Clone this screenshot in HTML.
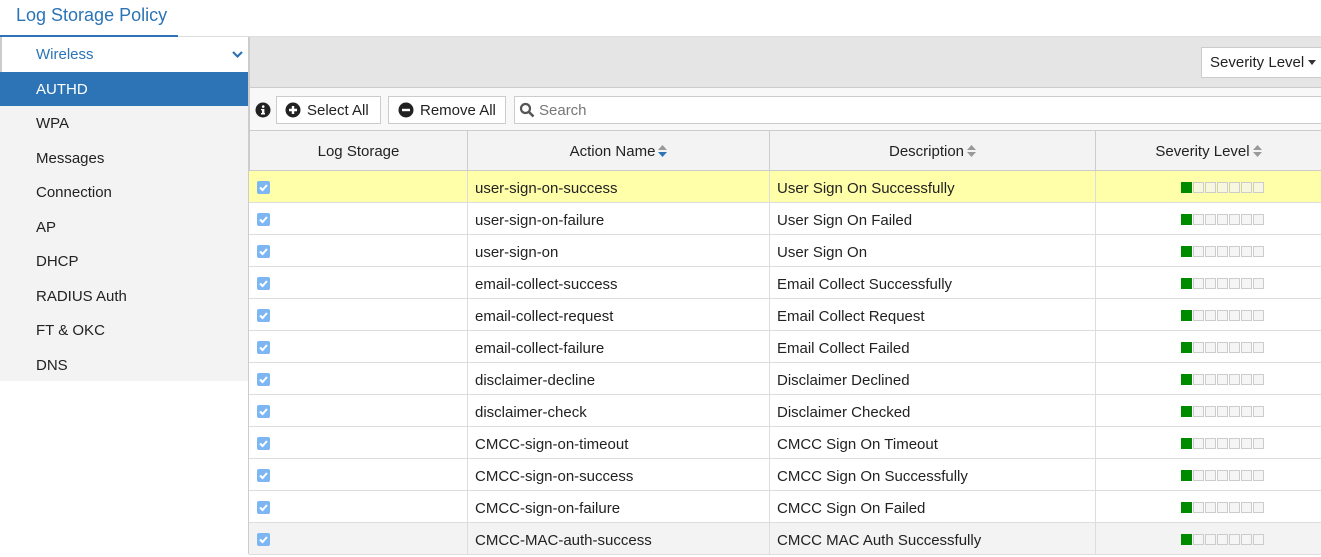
<!DOCTYPE html>
<html><head><meta charset="utf-8"><style>
*{margin:0;padding:0;box-sizing:border-box}
body{width:1321px;height:554px;overflow:hidden;background:#fff;font-family:"Liberation Sans",sans-serif;font-size:15px;color:#222;position:relative}
.a{position:absolute}
.title{left:16px;top:5px;font-size:18px;color:#2c74b5}
.side{left:0;top:37px;width:248px;height:344px;background:#f3f3f3}
.it{position:absolute;left:0;width:248px;height:34px;padding-left:36px;line-height:36px;font-size:15px;color:#222}
.row{position:absolute;left:249px;width:1072px;height:32px;border-bottom:1px solid #ddd}
.row div{position:absolute;top:2px;line-height:32px}
.row div.ln{top:0}
.cb{left:8px;top:10px!important;width:13px;height:13px;background:#7eb6f2;border-radius:2px;line-height:0!important}
.cb svg{display:block}
.sq{position:absolute;top:11px;width:11px;height:11px;border:1px solid #ccc;background:#f5f5f5}
.btn{position:absolute;top:96px;height:28px;border:1px solid #ccc;background:#fff;line-height:26px;font-size:15px}
.hd{position:absolute;top:131px;height:40px;line-height:42px;text-align:center;border-right:1px solid #ccc;color:#222}
.sort{display:inline-block;width:9px;height:14px;vertical-align:-2px;margin-left:3px}
</style></head><body>
<div class="a title">Log Storage Policy</div>
<div class="a" style="left:0;top:35px;width:178px;height:2px;background:#2c74b5"></div>
<div class="a" style="left:178px;top:36px;width:1143px;height:1px;background:#ddd"></div>
<div class="a side"></div>
<div class="it" style="top:37px;height:35px;background:#fff;border-left:2px solid #ccc;padding-left:34px;color:#2c74b5;line-height:35px">Wireless
<svg class="a" style="left:230px;top:14px" width="11" height="8" viewBox="0 0 11 8"><path d="M1 1l4.5 4.5L10 1" stroke="#2c74b5" stroke-width="2.2" fill="none"/></svg></div>
<div class="it" style="top:72px;background:#2c74b5;color:#fff">AUTHD</div>
<div class="it" style="top:106px">WPA</div>
<div class="it" style="top:141px">Messages</div>
<div class="it" style="top:175px">Connection</div>
<div class="it" style="top:210px">AP</div>
<div class="it" style="top:244px">DHCP</div>
<div class="it" style="top:279px">RADIUS Auth</div>
<div class="it" style="top:313px">FT &amp; OKC</div>
<div class="it" style="top:348px">DNS</div>
<div class="a" style="left:248px;top:37px;width:2px;height:517px;background:#ccc"></div>
<div class="a" style="left:250px;top:37px;width:1071px;height:50px;background:#e5e5e5"></div>
<div class="a" style="left:1201px;top:47px;width:130px;height:31px;background:#fff;border:1px solid #ccc;line-height:30px;padding-left:8px">Severity Level <svg width="8" height="5" viewBox="0 0 8 5" style="vertical-align:2px"><path d="M0 0h8L4 5z" fill="#333"/></svg></div>
<div class="a" style="left:250px;top:87px;width:1071px;height:44px;background:#f8f8f8;border-top:1px solid #ccc;border-bottom:1px solid #ccc"></div>
<svg class="a" style="left:255px;top:102px" width="16" height="16" viewBox="0 0 16 16"><circle cx="8" cy="8" r="7.5" fill="#222"/><rect x="7" y="7" width="2.4" height="5" fill="#fff"/><rect x="6" y="11" width="4" height="1.5" fill="#fff"/><rect x="6" y="7" width="2" height="1.3" fill="#fff"/><circle cx="8.2" cy="4.6" r="1.3" fill="#fff"/></svg>
<div class="btn" style="left:276px;width:105px;padding-left:30px;line-height:28px">Select All</div>
<svg class="a" style="left:285px;top:102px" width="16" height="16" viewBox="0 0 16 16"><circle cx="8" cy="8" r="7.5" fill="#222"/><path d="M8 4v8M4 8h8" stroke="#fff" stroke-width="2.4"/></svg>
<div class="btn" style="left:388px;width:118px;padding-left:31px;line-height:28px">Remove All</div>
<svg class="a" style="left:398px;top:102px" width="16" height="16" viewBox="0 0 16 16"><circle cx="8" cy="8" r="7.5" fill="#222"/><path d="M4 8h8" stroke="#fff" stroke-width="2.4"/></svg>
<div class="btn" style="left:514px;width:820px;padding-left:24px;color:#777;line-height:28px">Search</div>
<svg class="a" style="left:519px;top:102px" width="16" height="16" viewBox="0 0 16 16"><circle cx="6.5" cy="6.5" r="4.5" stroke="#555" stroke-width="2.2" fill="none"/><path d="M10 10l4.5 4.5" stroke="#555" stroke-width="2.6"/></svg>
<div class="a" style="left:250px;top:131px;width:1071px;height:40px;background:#f3f3f3;border-bottom:1px solid #ccc"></div>
<div class="hd" style="left:250px;width:218px">Log Storage</div>
<div class="hd" style="left:468px;width:302px">Action Name<svg class="sort" viewBox="0 0 9 14"><path d="M0 6L4.5 1 9 6z" fill="#999"/><path d="M0 8l4.5 5L9 8z" fill="#2c74b5"/></svg></div>
<div class="hd" style="left:770px;width:326px">Description<svg class="sort" viewBox="0 0 9 14"><path d="M0 6L4.5 1 9 6zM0 8l4.5 5L9 8z" fill="#999"/></svg></div>
<div class="hd" style="left:1096px;width:225px;border-right:none">Severity Level<svg class="sort" viewBox="0 0 9 14"><path d="M0 6L4.5 1 9 6zM0 8l4.5 5L9 8z" fill="#999"/></svg></div>
<div id="rows"></div>
<script>
var d=[["user-sign-on-success","User Sign On Successfully"],["user-sign-on-failure","User Sign On Failed"],["user-sign-on","User Sign On"],["email-collect-success","Email Collect Successfully"],["email-collect-request","Email Collect Request"],["email-collect-failure","Email Collect Failed"],["disclaimer-decline","Disclaimer Declined"],["disclaimer-check","Disclaimer Checked"],["CMCC-sign-on-timeout","CMCC Sign On Timeout"],["CMCC-sign-on-success","CMCC Sign On Successfully"],["CMCC-sign-on-failure","CMCC Sign On Failed"],["CMCC-MAC-auth-success","CMCC MAC Auth Successfully"]];
var h="";d.forEach(function(r,i){var bg=i==0?"#ffffaa":(i==11?"#f3f3f3":"#fff");var sb=i==0?"#f7f7e0":"#f5f5f5";
h+='<div class="row" style="top:'+(171+i*32)+'px;background:'+bg+'"><div class="cb"><svg width="13" height="13" viewBox="0 0 13 13"><path d="M3 6.5l2.5 2.5L10 4" stroke="#fff" stroke-width="2" fill="none"/></svg></div>'+
'<div class="ln" style="left:218px;width:1px;height:32px;background:#ddd"></div><div style="left:226px">'+r[0]+'</div><div class="ln" style="left:520px;width:1px;height:32px;background:#ddd"></div><div style="left:528px">'+r[1]+'</div><div class="ln" style="left:846px;width:1px;height:32px;background:#ddd"></div>';
for(var k=0;k<7;k++)h+='<span class="sq" style="left:'+(932+k*12)+'px;'+(k==0?'background:#008a00;border-color:#008a00':'background:'+sb)+'"></span>';
h+='</div>';});document.getElementById("rows").innerHTML=h;
</script>
</body></html>
